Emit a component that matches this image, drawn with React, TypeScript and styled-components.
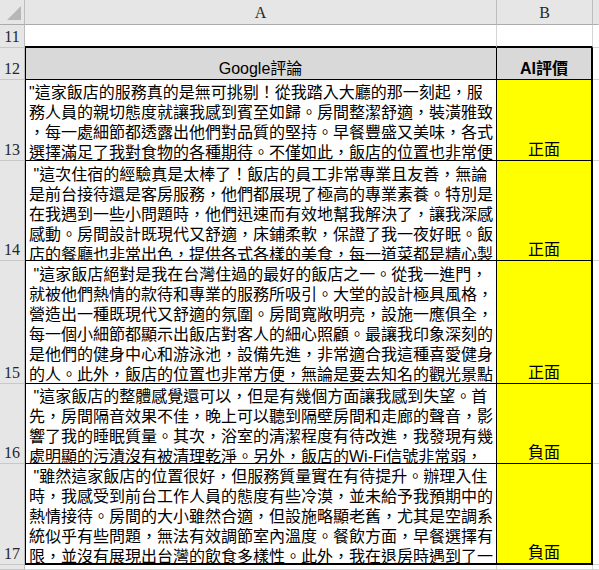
import React from "react";
import styled, { createGlobalStyle } from "styled-components";

const Global = createGlobalStyle`
  html, body { margin: 0; padding: 0; background: #ffffff; }
  body { width: 599px; height: 570px; overflow: hidden; }
  * { box-sizing: border-box; }
`;

const Sheet = styled.div`
  display: grid;
  grid-template-columns: 25px 472px 96px 1fr;
  grid-template-rows: 25px 23px 32px 81px 100px 123px 80px 101px 1fr;
  width: 599px;
  height: 570px;
  overflow: hidden;
  font-family: "Liberation Sans", "Noto Sans CJK TC", sans-serif;
  font-size: 16px;
  color: #000;
  background: #fff;
`;

const Corner = styled.div`
  position: relative;
  background: #e6e6e6;
  border-right: 1px solid #bdbdbd;
  border-bottom: 1px solid #ababab;
`;

const CornerMark = styled.svg`
  position: absolute;
  right: 2px;
  bottom: 3px;
`;

const ColHead = styled.div<{ $last?: boolean }>`
  display: flex;
  align-items: center;
  justify-content: center;
  background: #e6e6e6;
  border-right: 1px solid ${(p) => (p.$last ? "transparent" : "#bdbdbd")};
  border-bottom: 1px solid #ababab;
  font-family: "Liberation Serif", serif;
  font-size: 16px;
  color: #262626;
  padding-top: 2px;
`;

const RowHead = styled.div`
  display: flex;
  align-items: flex-end;
  justify-content: center;
  background: #e6e6e6;
  border-right: 1px solid #bdbdbd;
  border-bottom: 1px solid #c8c8c8;
  font-family: "Liberation Serif", serif;
  font-size: 16px;
  line-height: 20px;
  color: #262626;
`;

type Edge = "grid" | "thin" | "thick" | "none";
const edge = (e: Edge) =>
  e === "thick"
    ? "2px solid #000"
    : e === "thin"
    ? "1px solid #000"
    : e === "grid"
    ? "1px solid #d4d4d4"
    : "0 solid transparent";

const Cell = styled.div<{
  $right?: Edge;
  $bottom?: Edge;
  $fill?: string;
  $left?: boolean;
}>`
  display: flex;
  flex-direction: column;
  justify-content: flex-end;
  align-items: center;
  overflow: hidden;
  background: ${(p) => p.$fill || "#fff"};
  border-right: ${(p) => edge(p.$right || "grid")};
  border-bottom: ${(p) => edge(p.$bottom || "grid")};
  box-shadow: ${(p) => (p.$left ? "inset 1px 0 0 #000" : "none")};
  line-height: 20px;
`;

const HeadLabel = styled.span<{ $bold?: boolean }>`
  font-weight: ${(p) => (p.$bold ? 700 : 400)};
  white-space: nowrap;
`;

const ReviewCell = styled.div<{ $offset: number }>`
  overflow: hidden;
  border-right: 1px solid #000;
  border-bottom: 1px solid #000;
  box-shadow: inset 1px 0 0 #000;
  padding: ${(p) => p.$offset}px 0 0 4px;
  background: #fff;
`;

const LastReviewCell = styled(ReviewCell)`
  border-bottom: 2px solid #000;
`;

const Line = styled.div`
  height: 20px;
  line-height: 20px;
  white-space: pre;
`;

const Verdict = styled.div<{ $last?: boolean }>`
  display: flex;
  align-items: flex-end;
  justify-content: center;
  background: #ffff00;
  border-right: 2px solid #000;
  border-bottom: ${(p) => (p.$last ? "2px solid #000" : "1px solid #000")};
  line-height: 20px;
  overflow: hidden;
`;

const Blank = styled.div`
  border-bottom: 1px solid #d4d4d4;
  background: #fff;
`;

type Row = { n: number; offset: number; label: string; lines: string[] };

const rows: Row[] = [
  {
    n: 13,
    offset: 3,
    label: "正面",
    lines: [
      "\"這家飯店的服務真的是無可挑剔！從我踏入大廳的那一刻起，服",
      "務人員的親切態度就讓我感到賓至如歸。房間整潔舒適，裝潢雅致",
      "，每一處細節都透露出他們對品質的堅持。早餐豐盛又美味，各式",
      "選擇滿足了我對食物的各種期待。不僅如此，飯店的位置也非常便",
    ],
  },
  {
    n: 14,
    offset: 4,
    label: "正面",
    lines: [
      " \"這次住宿的經驗真是太棒了！飯店的員工非常專業且友善，無論",
      "是前台接待還是客房服務，他們都展現了極高的專業素養。特別是",
      "在我遇到一些小問題時，他們迅速而有效地幫我解決了，讓我深感",
      "感動。房間設計既現代又舒適，床鋪柔軟，保證了我一夜好眠。飯",
      "店的餐廳也非常出色，提供各式各樣的美食，每一道菜都是精心製",
    ],
  },
  {
    n: 15,
    offset: 4,
    label: "正面",
    lines: [
      " \"這家飯店絕對是我在台灣住過的最好的飯店之一。從我一進門，",
      "就被他們熱情的款待和專業的服務所吸引。大堂的設計極具風格，",
      "營造出一種既現代又舒適的氛圍。房間寬敞明亮，設施一應俱全，",
      "每一個小細節都顯示出飯店對客人的細心照顧。最讓我印象深刻的",
      "是他們的健身中心和游泳池，設備先進，非常適合我這種喜愛健身",
      "的人。此外，飯店的位置也非常方便，無論是要去知名的觀光景點",
    ],
  },
  {
    n: 16,
    offset: 3,
    label: "負面",
    lines: [
      " \"這家飯店的整體感覺還可以，但是有幾個方面讓我感到失望。首",
      "先，房間隔音效果不佳，晚上可以聽到隔壁房間和走廊的聲音，影",
      "響了我的睡眠質量。其次，浴室的清潔程度有待改進，我發現有幾",
      "處明顯的污漬沒有被清理乾淨。另外，飯店的Wi-Fi信號非常弱，",
    ],
  },
  {
    n: 17,
    offset: 3,
    label: "負面",
    lines: [
      " \"雖然這家飯店的位置很好，但服務質量實在有待提升。辦理入住",
      "時，我感受到前台工作人員的態度有些冷漠，並未給予我預期中的",
      "熱情接待。房間的大小雖然合適，但設施略顯老舊，尤其是空調系",
      "統似乎有些問題，無法有效調節室內溫度。餐飲方面，早餐選擇有",
      "限，並沒有展現出台灣的飲食多樣性。此外，我在退房時遇到了一",
    ],
  },
];

export default function App() {
  return (
    <>
      <Global />
      <Sheet>
        <Corner>
          <CornerMark width="16" height="16" viewBox="0 0 16 16">
            <polygon points="1,15 15,1 15,15" fill="#b7b7b7" />
          </CornerMark>
        </Corner>
        <ColHead>A</ColHead>
        <ColHead>B</ColHead>
        <ColHead $last />

        <RowHead>11</RowHead>
        <Cell $bottom="thick" />
        <Cell $bottom="thick" $right="grid" />
        <Blank />

        <RowHead>12</RowHead>
        <Cell $fill="#d9d9d9" $right="thin" $bottom="thin" $left>
          <HeadLabel>Google評論</HeadLabel>
        </Cell>
        <Cell $fill="#d9d9d9" $right="thick" $bottom="thin">
          <HeadLabel $bold>AI評價</HeadLabel>
        </Cell>
        <Blank />

        {rows.map((r, i) => {
          const last = i === rows.length - 1;
          const Review = last ? LastReviewCell : ReviewCell;
          return (
            <React.Fragment key={r.n}>
              <RowHead>{r.n}</RowHead>
              <Review $offset={r.offset}>
                {r.lines.map((l, j) => (
                  <Line key={j}>{l}</Line>
                ))}
              </Review>
              <Verdict $last={last}>{r.label}</Verdict>
              <Blank />
            </React.Fragment>
          );
        })}

        <RowHead />
        <Cell />
        <Cell />
        <Blank />
      </Sheet>
    </>
  );
}
